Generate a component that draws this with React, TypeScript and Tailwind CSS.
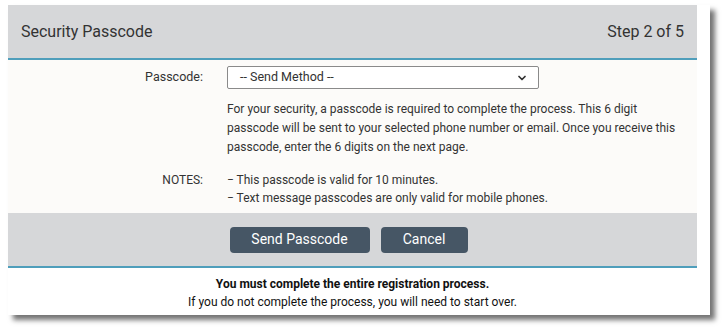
import { ChevronDown } from "lucide-react";

export default function App() {
  return (
    <div className="w-[724px] h-[332px] bg-white pt-[5px] pl-[8px]" style={{ fontFamily: "Roboto, 'Liberation Sans', sans-serif" }}>
      <div className="w-[702px] h-[310px] bg-white shadow-[5px_5px_5px_rgba(0,0,0,0.55)]">
        <div className="w-[689px]">
          {/* Header */}
          <div className="h-[53px] bg-[#d6d7d9] flex items-center justify-between pl-[13px] pr-[13px] text-[16px] text-[#333]">
            <span>Security Passcode</span>
            <span>Step 2 of 5</span>
          </div>
          <div className="h-[2px] bg-[#4f9ebb]" />

          {/* Body */}
          <div className="h-[153px] bg-[#fcfbf9] text-[12px] text-[#333] pt-[6px]">
            <div className="flex items-center">
              <div className="w-[195px] text-right text-[12.5px]">Passcode:</div>
              <div className="ml-[24px] w-[312px] h-[23px] border border-[#8a8a8a] rounded-[2px] bg-white flex items-center justify-between pl-[12px] pr-[10px]">
                <span className="text-[12.5px] text-[#333]">-- Send Method --</span>
                <ChevronDown className="w-[12px] h-[12px] text-[#333]" strokeWidth={3.5} />
              </div>
            </div>
            <p className="ml-[219px] mt-[11px] w-[465px] leading-[19px]">
              For your security, a passcode is required to complete the process. This 6 digit passcode will be sent to your selected phone number or email. Once you receive this passcode, enter the 6 digits on the next page.
            </p>
            <div className="flex mt-[14px] leading-[18px]">
              <div className="w-[195px] text-right">NOTES:</div>
              <div className="ml-[24px]">
                <div>− This passcode is valid for 10 minutes.</div>
                <div>− Text message passcodes are only valid for mobile phones.</div>
              </div>
            </div>
          </div>

          {/* Footer */}
          <div className="h-[53px] bg-[#d6d7d9] flex items-center justify-center gap-[11px] pr-[8px]">
            <button className="w-[140px] h-[26px] rounded-[4px] bg-[#465665] text-white text-[14px]">Send Passcode</button>
            <button className="w-[87px] h-[26px] rounded-[4px] bg-[#465665] text-white text-[14px]">Cancel</button>
          </div>
          <div className="h-[2px] bg-[#4f9ebb]" />

          <div className="text-center text-[12px] text-[#111] pt-[7px] leading-[18px]">
            <div className="font-bold">You must complete the entire registration process.</div>
            <div>If you do not complete the process, you will need to start over.</div>
          </div>
        </div>
      </div>
    </div>
  );
}
